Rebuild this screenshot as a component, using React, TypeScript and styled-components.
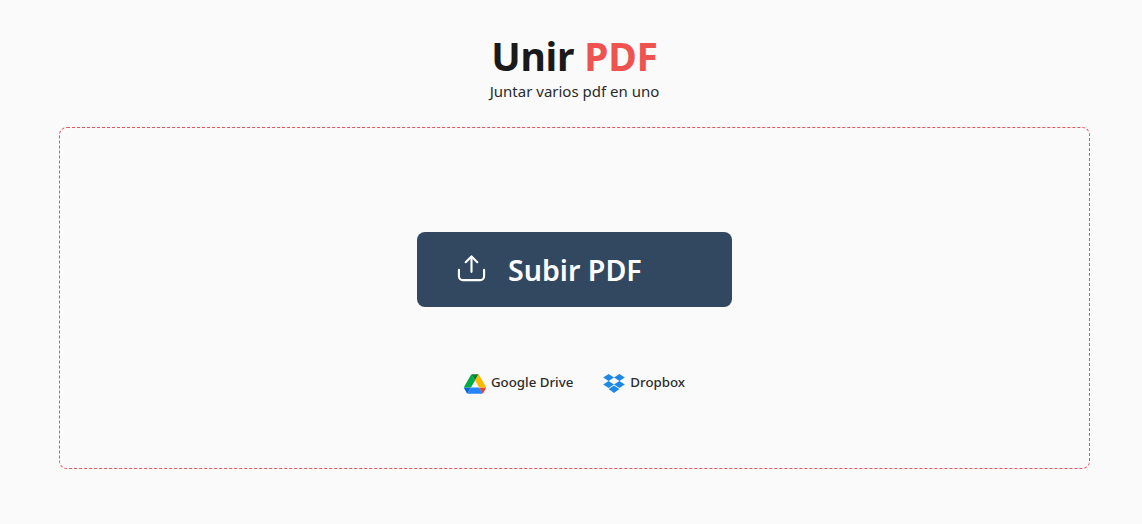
import React from "react";
import styled, { createGlobalStyle } from "styled-components";

const Global = createGlobalStyle`
  html, body { margin: 0; padding: 0; background: #fafafa; }
  body { font-family: "Noto Sans", "Open Sans", sans-serif; }
`;

const Page = styled.main`
  box-sizing: border-box;
  width: 1142px;
  height: 524px;
  padding: 30px 52px 0 59px;
  display: flex;
  flex-direction: column;
  align-items: stretch;
  overflow: hidden;
`;

const Header = styled.header`
  display: flex;
  flex-direction: column;
  align-items: center;
  height: 97px;
`;

const Title = styled.h1`
  margin: 0;
  font-size: 39px;
  line-height: 52px;
  font-weight: 700;
  color: #1a1a1a;
  letter-spacing: -0.2px;
`;

const Accent = styled.span`
  color: #ef5350;
`;

const Subtitle = styled.p`
  margin: -1px 0 0;
  font-size: 15px;
  line-height: 20px;
  color: #2b2b2b;
`;

const DropZone = styled.section`
  box-sizing: border-box;
  height: 342px;
  border: 1px dashed #e4555c;
  border-radius: 8px;
  display: flex;
  flex-direction: column;
  align-items: center;
  padding-top: 104px;
`;

const UploadButton = styled.button`
  box-sizing: border-box;
  width: 315px;
  height: 75px;
  border: 0;
  border-radius: 8px;
  background: #324860;
  color: #fff;
  display: flex;
  align-items: center;
  gap: 22px;
  padding: 0 0 0 40px;
  font-family: inherit;
  font-size: 28.6px;
  font-weight: 600;
`;

const UploadGlyph = styled.svg`
  margin-top: -3px;
`;

const Sources = styled.div`
  display: flex;
  align-items: center;
  gap: 30px;
  margin-top: 64px;
`;

const Source = styled.a`
  display: flex;
  align-items: center;
  gap: 5px;
  font-size: 13.3px;
  font-weight: 500;
  color: #2b2b2b;
`;

const BrandGlyph = styled.svg`
  transform: translateY(2px);
`;

const UploadIcon = () => (
  <UploadGlyph width="29" height="30" viewBox="0 0 30 30" fill="none" stroke="#fff" strokeWidth="2.2" strokeLinecap="round" strokeLinejoin="round">
    <path d="M15 19V3.5" />
    <path d="M9 9l6-6 6 6" />
    <path d="M2 17v6.5a4 4 0 0 0 4 4h18a4 4 0 0 0 4-4V17" />
  </UploadGlyph>
);

const DriveIcon = () => (
  <BrandGlyph width="22" height="20" viewBox="0 0 87.3 78">
    <path d="M6.6 66.85l3.85 6.65c.8 1.4 1.95 2.5 3.3 3.3L27.5 53H0c0 1.55.4 3.1 1.2 4.5z" fill="#0066da" />
    <path d="M43.65 25L29.9 1.2c-1.35.8-2.5 1.9-3.3 3.3L1.2 48.5C.4 49.9 0 51.45 0 53h27.5z" fill="#00ac47" />
    <path d="M73.55 76.8c1.35-.8 2.5-1.9 3.3-3.3l1.6-2.75L86.1 57.5c.8-1.4 1.2-2.95 1.2-4.5H59.8l5.85 11.5z" fill="#ea4335" />
    <path d="M43.65 25L57.4 1.2C56.05.4 54.5 0 52.9 0H34.4c-1.6 0-3.15.45-4.5 1.2z" fill="#00832d" />
    <path d="M59.8 53H27.5L13.75 76.8c1.35.8 2.9 1.2 4.5 1.2h50.8c1.6 0 3.15-.45 4.5-1.2z" fill="#2684fc" />
    <path d="M73.4 26.5L60.7 4.5c-.8-1.4-1.95-2.5-3.3-3.3L43.65 25 59.8 53h27.45c0-1.55-.4-3.1-1.2-4.5z" fill="#ffba00" />
  </BrandGlyph>
);

const DropboxIcon = () => (
  <BrandGlyph width="22" height="21" viewBox="0 0 22 20" fill="#1e88e5">
    <path d="M5.6 0.4L0.2 3.9l5.4 3.5L11 3.9z" />
    <path d="M16.4 0.4L11 3.9l5.4 3.5 5.4-3.5z" />
    <path d="M0.2 10.9l5.4 3.5L11 10.9 5.6 7.4z" />
    <path d="M16.4 7.4L11 10.9l5.4 3.5 5.4-3.5z" />
    <path d="M5.6 15.6L11 19.6l5.4-4-5.4-3.5z" />
  </BrandGlyph>
);

export default function App() {
  return (
    <>
      <Global />
      <Page>
        <Header>
          <Title>
            Unir <Accent>PDF</Accent>
          </Title>
          <Subtitle>Juntar varios pdf en uno</Subtitle>
        </Header>
        <DropZone>
          <UploadButton>
            <UploadIcon />
            Subir PDF
          </UploadButton>
          <Sources>
            <Source>
              <DriveIcon />
              Google Drive
            </Source>
            <Source>
              <DropboxIcon />
              Dropbox
            </Source>
          </Sources>
        </DropZone>
      </Page>
    </>
  );
}
